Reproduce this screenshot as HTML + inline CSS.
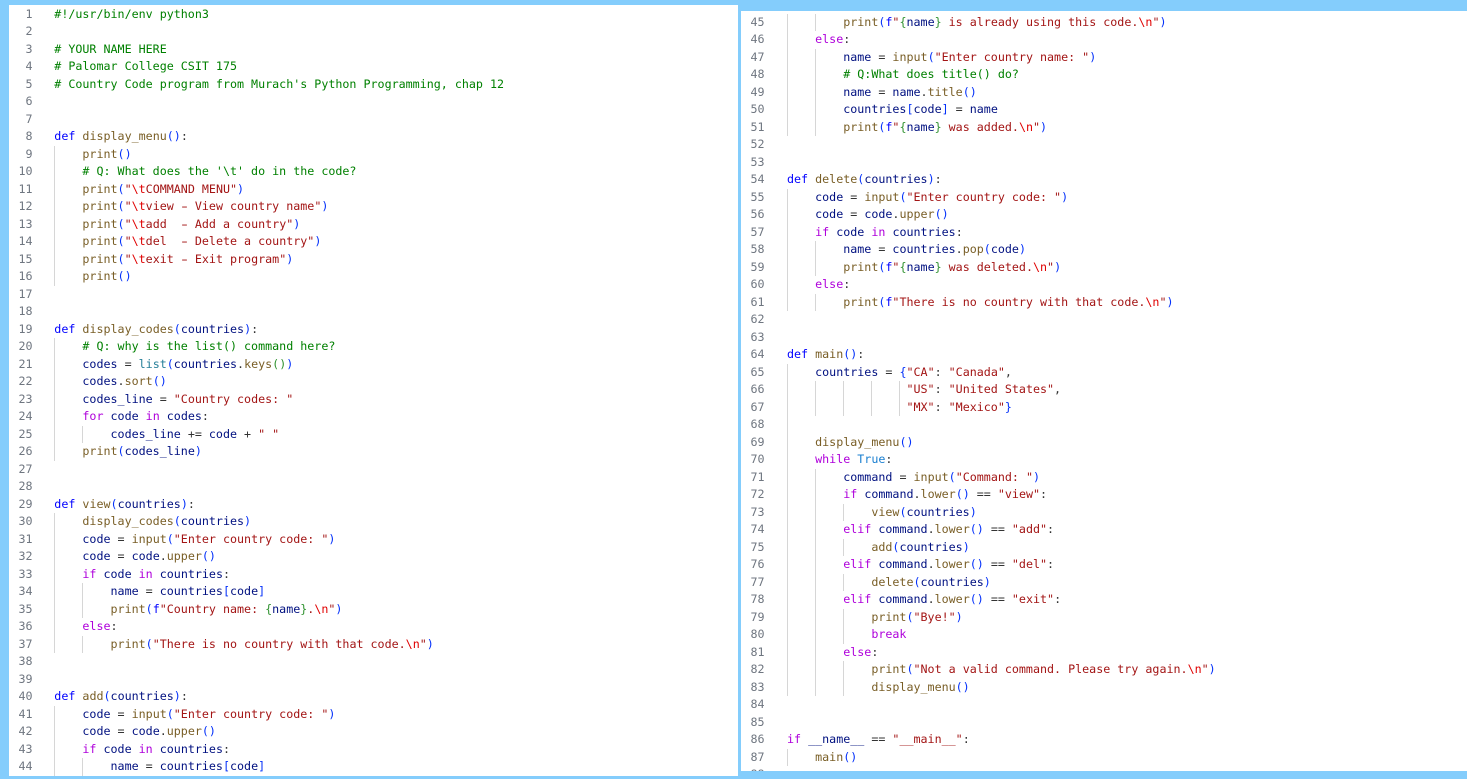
<!DOCTYPE html>
<html><head><meta charset="utf-8"><style>
html,body{margin:0;padding:0;width:1467px;height:779px;overflow:hidden;background:#84cdfc}
.p{position:absolute;background:#fff;overflow:hidden;font:11.68px/17.5px "DejaVu Sans Mono","Liberation Mono",monospace;color:#333;filter:blur(.35px)}
#L{left:9px;top:5px;width:729px;height:771px}
#R{left:741px;top:11px;width:726px;height:760px;padding-top:0}
#R .w{padding-top:2.75px}
#L .w{padding-top:.75px}
.l{position:relative;height:17.5px;white-space:pre}
.l i{position:absolute;left:0;width:23.5px;text-align:right;font-style:normal;color:#6f7680}
.t{position:absolute;top:0;left:45.3px;right:0;height:17.5px}
#R .t{left:46px}
.g1 .t{background:linear-gradient(#d6d6d6,#d6d6d6) 0 0/1px 100% no-repeat}
.g2 .t{background:linear-gradient(#d6d6d6,#d6d6d6) 0 0/1px 100% no-repeat,linear-gradient(#d6d6d6,#d6d6d6) 28.1px 0/1px 100% no-repeat}
.g3 .t{background:linear-gradient(#d6d6d6,#d6d6d6) 0 0/1px 100% no-repeat,linear-gradient(#d6d6d6,#d6d6d6) 28.1px 0/1px 100% no-repeat,linear-gradient(#d6d6d6,#d6d6d6) 56.2px 0/1px 100% no-repeat}
.g5 .t{background:linear-gradient(#d6d6d6,#d6d6d6) 0 0/1px 100% no-repeat,linear-gradient(#d6d6d6,#d6d6d6) 28.1px 0/1px 100% no-repeat,linear-gradient(#d6d6d6,#d6d6d6) 56.2px 0/1px 100% no-repeat,linear-gradient(#d6d6d6,#d6d6d6) 84.3px 0/1px 100% no-repeat,linear-gradient(#d6d6d6,#d6d6d6) 112.4px 0/1px 100% no-repeat}
.c{color:#008000}.d{color:#0000ff}.f{color:#795e26}.v{color:#001080}.s{color:#a31515}.k{color:#af00db}.b{color:#0431fa}.g{color:#319331}.e{color:#e00000}.y{color:#267f99}
.h{display:inline-block;transform:scaleX(1.6)}
</style></head><body>
<div class="p" id="L"><div class="w">
<div class="l"><i>1</i><div class="t"><span class="c">#!/usr/bin/env python3</span></div></div>
<div class="l"><i>2</i><div class="t"></div></div>
<div class="l"><i>3</i><div class="t"><span class="c"># YOUR NAME HERE</span></div></div>
<div class="l"><i>4</i><div class="t"><span class="c"># Palomar College CSIT 175</span></div></div>
<div class="l"><i>5</i><div class="t"><span class="c"># Country Code program from Murach's Python Programming, chap 12</span></div></div>
<div class="l"><i>6</i><div class="t"></div></div>
<div class="l"><i>7</i><div class="t"></div></div>
<div class="l"><i>8</i><div class="t"><span class="d">def</span> <span class="f">display_menu</span><span class="b">()</span>:</div></div>
<div class="l g1"><i>9</i><div class="t">    <span class="f">print</span><span class="b">()</span></div></div>
<div class="l g1"><i>10</i><div class="t">    <span class="c"># Q: What does the '\t' do in the code?</span></div></div>
<div class="l g1"><i>11</i><div class="t">    <span class="f">print</span><span class="b">(</span><span class="s">"<span class="e">\t</span>COMMAND MENU"</span><span class="b">)</span></div></div>
<div class="l g1"><i>12</i><div class="t">    <span class="f">print</span><span class="b">(</span><span class="s">"<span class="e">\t</span>view <span class="h">-</span> View country name"</span><span class="b">)</span></div></div>
<div class="l g1"><i>13</i><div class="t">    <span class="f">print</span><span class="b">(</span><span class="s">"<span class="e">\t</span>add  <span class="h">-</span> Add a country"</span><span class="b">)</span></div></div>
<div class="l g1"><i>14</i><div class="t">    <span class="f">print</span><span class="b">(</span><span class="s">"<span class="e">\t</span>del  <span class="h">-</span> Delete a country"</span><span class="b">)</span></div></div>
<div class="l g1"><i>15</i><div class="t">    <span class="f">print</span><span class="b">(</span><span class="s">"<span class="e">\t</span>exit <span class="h">-</span> Exit program"</span><span class="b">)</span></div></div>
<div class="l g1"><i>16</i><div class="t">    <span class="f">print</span><span class="b">()</span></div></div>
<div class="l"><i>17</i><div class="t"></div></div>
<div class="l"><i>18</i><div class="t"></div></div>
<div class="l"><i>19</i><div class="t"><span class="d">def</span> <span class="f">display_codes</span><span class="b">(</span><span class="v">countries</span><span class="b">)</span>:</div></div>
<div class="l g1"><i>20</i><div class="t">    <span class="c"># Q: why is the list() command here?</span></div></div>
<div class="l g1"><i>21</i><div class="t">    <span class="v">codes</span> = <span class="y">list</span><span class="b">(</span><span class="v">countries</span>.<span class="f">keys</span><span class="g">()</span><span class="b">)</span></div></div>
<div class="l g1"><i>22</i><div class="t">    <span class="v">codes</span>.<span class="f">sort</span><span class="b">()</span></div></div>
<div class="l g1"><i>23</i><div class="t">    <span class="v">codes_line</span> = <span class="s">"Country codes: "</span></div></div>
<div class="l g1"><i>24</i><div class="t">    <span class="k">for</span> <span class="v">code</span> <span class="k">in</span> <span class="v">codes</span>:</div></div>
<div class="l g2"><i>25</i><div class="t">        <span class="v">codes_line</span> += <span class="v">code</span> + <span class="s">" "</span></div></div>
<div class="l g1"><i>26</i><div class="t">    <span class="f">print</span><span class="b">(</span><span class="v">codes_line</span><span class="b">)</span></div></div>
<div class="l"><i>27</i><div class="t"></div></div>
<div class="l"><i>28</i><div class="t"></div></div>
<div class="l"><i>29</i><div class="t"><span class="d">def</span> <span class="f">view</span><span class="b">(</span><span class="v">countries</span><span class="b">)</span>:</div></div>
<div class="l g1"><i>30</i><div class="t">    <span class="f">display_codes</span><span class="b">(</span><span class="v">countries</span><span class="b">)</span></div></div>
<div class="l g1"><i>31</i><div class="t">    <span class="v">code</span> = <span class="f">input</span><span class="b">(</span><span class="s">"Enter country code: "</span><span class="b">)</span></div></div>
<div class="l g1"><i>32</i><div class="t">    <span class="v">code</span> = <span class="v">code</span>.<span class="f">upper</span><span class="b">()</span></div></div>
<div class="l g1"><i>33</i><div class="t">    <span class="k">if</span> <span class="v">code</span> <span class="k">in</span> <span class="v">countries</span>:</div></div>
<div class="l g2"><i>34</i><div class="t">        <span class="v">name</span> = <span class="v">countries</span><span class="b">[</span><span class="v">code</span><span class="b">]</span></div></div>
<div class="l g2"><i>35</i><div class="t">        <span class="f">print</span><span class="b">(</span><span class="d">f</span><span class="s">"Country name: </span><span class="g">{</span><span class="v">name</span><span class="g">}</span><span class="s">.<span class="e">\n</span>"</span><span class="b">)</span></div></div>
<div class="l g1"><i>36</i><div class="t">    <span class="k">else</span>:</div></div>
<div class="l g2"><i>37</i><div class="t">        <span class="f">print</span><span class="b">(</span><span class="s">"There is no country with that code.<span class="e">\n</span>"</span><span class="b">)</span></div></div>
<div class="l"><i>38</i><div class="t"></div></div>
<div class="l"><i>39</i><div class="t"></div></div>
<div class="l"><i>40</i><div class="t"><span class="d">def</span> <span class="f">add</span><span class="b">(</span><span class="v">countries</span><span class="b">)</span>:</div></div>
<div class="l g1"><i>41</i><div class="t">    <span class="v">code</span> = <span class="f">input</span><span class="b">(</span><span class="s">"Enter country code: "</span><span class="b">)</span></div></div>
<div class="l g1"><i>42</i><div class="t">    <span class="v">code</span> = <span class="v">code</span>.<span class="f">upper</span><span class="b">()</span></div></div>
<div class="l g1"><i>43</i><div class="t">    <span class="k">if</span> <span class="v">code</span> <span class="k">in</span> <span class="v">countries</span>:</div></div>
<div class="l g2"><i>44</i><div class="t">        <span class="v">name</span> = <span class="v">countries</span><span class="b">[</span><span class="v">code</span><span class="b">]</span></div></div>
</div></div>
<div class="p" id="R"><div class="w">
<div class="l g2"><i>45</i><div class="t">        <span class="f">print</span><span class="b">(</span><span class="d">f</span><span class="s">"</span><span class="g">{</span><span class="v">name</span><span class="g">}</span><span class="s"> is already using this code.<span class="e">\n</span>"</span><span class="b">)</span></div></div>
<div class="l g1"><i>46</i><div class="t">    <span class="k">else</span>:</div></div>
<div class="l g2"><i>47</i><div class="t">        <span class="v">name</span> = <span class="f">input</span><span class="b">(</span><span class="s">"Enter country name: "</span><span class="b">)</span></div></div>
<div class="l g2"><i>48</i><div class="t">        <span class="c"># Q:What does title() do?</span></div></div>
<div class="l g2"><i>49</i><div class="t">        <span class="v">name</span> = <span class="v">name</span>.<span class="f">title</span><span class="b">()</span></div></div>
<div class="l g2"><i>50</i><div class="t">        <span class="v">countries</span><span class="b">[</span><span class="v">code</span><span class="b">]</span> = <span class="v">name</span></div></div>
<div class="l g2"><i>51</i><div class="t">        <span class="f">print</span><span class="b">(</span><span class="d">f</span><span class="s">"</span><span class="g">{</span><span class="v">name</span><span class="g">}</span><span class="s"> was added.<span class="e">\n</span>"</span><span class="b">)</span></div></div>
<div class="l"><i>52</i><div class="t"></div></div>
<div class="l"><i>53</i><div class="t"></div></div>
<div class="l"><i>54</i><div class="t"><span class="d">def</span> <span class="f">delete</span><span class="b">(</span><span class="v">countries</span><span class="b">)</span>:</div></div>
<div class="l g1"><i>55</i><div class="t">    <span class="v">code</span> = <span class="f">input</span><span class="b">(</span><span class="s">"Enter country code: "</span><span class="b">)</span></div></div>
<div class="l g1"><i>56</i><div class="t">    <span class="v">code</span> = <span class="v">code</span>.<span class="f">upper</span><span class="b">()</span></div></div>
<div class="l g1"><i>57</i><div class="t">    <span class="k">if</span> <span class="v">code</span> <span class="k">in</span> <span class="v">countries</span>:</div></div>
<div class="l g2"><i>58</i><div class="t">        <span class="v">name</span> = <span class="v">countries</span>.<span class="f">pop</span><span class="b">(</span><span class="v">code</span><span class="b">)</span></div></div>
<div class="l g2"><i>59</i><div class="t">        <span class="f">print</span><span class="b">(</span><span class="d">f</span><span class="s">"</span><span class="g">{</span><span class="v">name</span><span class="g">}</span><span class="s"> was deleted.<span class="e">\n</span>"</span><span class="b">)</span></div></div>
<div class="l g1"><i>60</i><div class="t">    <span class="k">else</span>:</div></div>
<div class="l g2"><i>61</i><div class="t">        <span class="f">print</span><span class="b">(</span><span class="d">f</span><span class="s">"There is no country with that code.<span class="e">\n</span>"</span><span class="b">)</span></div></div>
<div class="l"><i>62</i><div class="t"></div></div>
<div class="l"><i>63</i><div class="t"></div></div>
<div class="l"><i>64</i><div class="t"><span class="d">def</span> <span class="f">main</span><span class="b">()</span>:</div></div>
<div class="l g1"><i>65</i><div class="t">    <span class="v">countries</span> = <span class="b">{</span><span class="s">"CA"</span>: <span class="s">"Canada"</span>,</div></div>
<div class="l g5"><i>66</i><div class="t">                 <span class="s">"US"</span>: <span class="s">"United States"</span>,</div></div>
<div class="l g5"><i>67</i><div class="t">                 <span class="s">"MX"</span>: <span class="s">"Mexico"</span><span class="b">}</span></div></div>
<div class="l g1"><i>68</i><div class="t"></div></div>
<div class="l g1"><i>69</i><div class="t">    <span class="f">display_menu</span><span class="b">()</span></div></div>
<div class="l g1"><i>70</i><div class="t">    <span class="k">while</span> <span class="d" style="color:#1a7fd0">True</span>:</div></div>
<div class="l g2"><i>71</i><div class="t">        <span class="v">command</span> = <span class="f">input</span><span class="b">(</span><span class="s">"Command: "</span><span class="b">)</span></div></div>
<div class="l g2"><i>72</i><div class="t">        <span class="k">if</span> <span class="v">command</span>.<span class="f">lower</span><span class="b">()</span> == <span class="s">"view"</span>:</div></div>
<div class="l g3"><i>73</i><div class="t">            <span class="f">view</span><span class="b">(</span><span class="v">countries</span><span class="b">)</span></div></div>
<div class="l g2"><i>74</i><div class="t">        <span class="k">elif</span> <span class="v">command</span>.<span class="f">lower</span><span class="b">()</span> == <span class="s">"add"</span>:</div></div>
<div class="l g3"><i>75</i><div class="t">            <span class="f">add</span><span class="b">(</span><span class="v">countries</span><span class="b">)</span></div></div>
<div class="l g2"><i>76</i><div class="t">        <span class="k">elif</span> <span class="v">command</span>.<span class="f">lower</span><span class="b">()</span> == <span class="s">"del"</span>:</div></div>
<div class="l g3"><i>77</i><div class="t">            <span class="f">delete</span><span class="b">(</span><span class="v">countries</span><span class="b">)</span></div></div>
<div class="l g2"><i>78</i><div class="t">        <span class="k">elif</span> <span class="v">command</span>.<span class="f">lower</span><span class="b">()</span> == <span class="s">"exit"</span>:</div></div>
<div class="l g3"><i>79</i><div class="t">            <span class="f">print</span><span class="b">(</span><span class="s">"Bye!"</span><span class="b">)</span></div></div>
<div class="l g3"><i>80</i><div class="t">            <span class="k">break</span></div></div>
<div class="l g2"><i>81</i><div class="t">        <span class="k">else</span>:</div></div>
<div class="l g3"><i>82</i><div class="t">            <span class="f">print</span><span class="b">(</span><span class="s">"Not a valid command. Please try again.<span class="e">\n</span>"</span><span class="b">)</span></div></div>
<div class="l g3"><i>83</i><div class="t">            <span class="f">display_menu</span><span class="b">()</span></div></div>
<div class="l"><i>84</i><div class="t"></div></div>
<div class="l"><i>85</i><div class="t"></div></div>
<div class="l"><i>86</i><div class="t"><span class="k">if</span> <span class="v">__name__</span> == <span class="s">"__main__"</span>:</div></div>
<div class="l g1"><i>87</i><div class="t">    <span class="f">main</span><span class="b">()</span></div></div>
<div class="l"><i>88</i><div class="t"></div></div>
</div></div>
</body></html>
